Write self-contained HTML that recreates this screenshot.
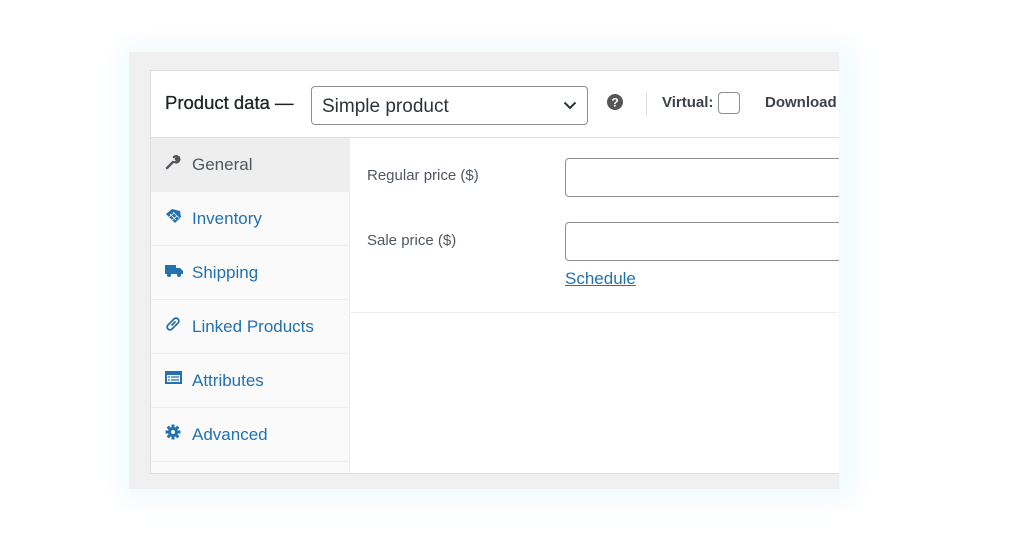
<!DOCTYPE html>
<html><head><meta charset="utf-8"><style>
*{margin:0;padding:0;box-sizing:border-box}
body{width:1024px;height:544px;background:#fff;position:relative;overflow:hidden;font-family:"Liberation Sans",sans-serif}
.glow{position:absolute;left:121px;top:44px;width:736px;height:456px;border-radius:14px;background:#f1fafb;filter:blur(12px)}
.frame{position:absolute;left:129px;top:52px;width:710px;height:437px;background:#f0f0f1}
.panel{position:absolute;left:150px;top:70px;width:689px;height:404px;background:#fff;border:1px solid #ddd;border-right:none;overflow:hidden}
.hdr{position:absolute;left:0;top:0;width:100%;height:67px;border-bottom:1px solid #ddd}
.t{position:absolute;font-size:17px;color:#1d2327}
.sel{position:absolute;left:160px;top:15px;width:277px;height:39px;border:1px solid #8c8f94;border-radius:4px;font-size:19px;color:#2c3338;padding:9px 10px}
.side{position:absolute;left:0;top:67px;width:199px;height:337px;background:#fafafa;border-right:1px solid #eee}
.it{height:54px;border-bottom:1px solid #eee;color:#2271b1;font-size:17px;padding:17px 0 0 41px;position:relative}
.it svg{position:absolute;left:14px;top:16px}
.it.act{background:#eee;color:#50575e}
.lbl{position:absolute;font-size:15px;color:#50575e}
.inp{position:absolute;left:414px;width:300px;height:39px;border:1px solid #8c8f94;border-radius:4px;background:#fff}
</style></head><body>
<div class="glow"></div>
<div class="frame"></div>
<div class="panel">
 <div class="hdr">
  <div class="t" style="left:14px;top:21px;font-size:18.5px;-webkit-text-stroke:0.3px #1d2327">Product data —</div>
  <div class="sel">Simple product
   <svg style="position:absolute;right:10px;top:14px" width="14" height="9" viewBox="0 0 14 9"><path d="M1.5 1.5L7 7L12.5 1.5" fill="none" stroke="#2c3338" stroke-width="2"/></svg></div>
  <svg style="position:absolute;left:456px;top:23px" width="16" height="16" viewBox="0 0 16 16"><circle cx="8" cy="8" r="8" fill="#555"/><text x="8" y="12.5" font-size="12" font-weight="bold" fill="#fff" text-anchor="middle" font-family="Liberation Sans">?</text></svg>
  <div style="position:absolute;left:495px;top:21px;width:1px;height:24px;background:#ddd"></div>
  <div class="t" style="left:511px;top:23px;font-size:15px;font-weight:bold;color:#3c434a">Virtual:</div>
  <div style="position:absolute;left:567px;top:21px;width:22px;height:22px;border:1px solid #8c8f94;border-radius:4px"></div>
  <div class="t" style="left:614px;top:23px;font-size:15px;font-weight:bold;color:#3c434a">Download</div>
 </div>
 <div class="side">
  <div class="it act"><svg width="16" height="16" viewBox="0 0 16 16"><path d="M2 14L8 8M9 3a3 3 0 0 1 4 0l-2 2 1 1 2-2a3 3 0 0 1-4 4" fill="none" stroke="#50575e" stroke-width="2.4" stroke-linecap="round"/></svg>General</div>
  <div class="it"><svg width="18" height="16" viewBox="0 0 18 16"><path d="M1 6L7 1L15 3L16 9L10 15Z" fill="#2271b1"/><path d="M5 6l6 6M8 4l6 6M4 9l5-4M7 12l5-4" stroke="#fff" stroke-width=".8"/></svg>Inventory</div>
  <div class="it"><svg width="18" height="16" viewBox="0 0 18 16"><path d="M0 3h11v9H0zM11 6h4l3 3v3h-7z" fill="#2271b1"/><circle cx="4" cy="13" r="2" fill="#2271b1"/><circle cx="14" cy="13" r="2" fill="#2271b1"/></svg>Shipping</div>
  <div class="it"><svg width="16" height="16" viewBox="0 0 16 16"><path d="M7 9L10 6M6 6l-3 3a2.5 2.5 0 0 0 4 4l2-2M10 10l3-3a2.5 2.5 0 0 0-4-4L7 5" fill="none" stroke="#2271b1" stroke-width="1.8" stroke-linecap="round"/></svg>Linked Products</div>
  <div class="it"><svg width="17" height="15" viewBox="0 0 17 15"><rect x="0" y="1" width="17" height="13" fill="#2271b1"/><rect x="2" y="5" width="13" height="7" fill="#fff"/><path d="M3 7h2M3 10h2M6 7h8M6 10h8" stroke="#2271b1" stroke-width="1.2"/></svg>Attributes</div>
  <div class="it"><svg width="16" height="16" viewBox="0 0 16 16"><g fill="#2271b1"><circle cx="8" cy="8" r="5"/><rect x="6.5" y="0.5" width="3" height="15"/><rect x="0.5" y="6.5" width="15" height="3"/><rect x="6.5" y="0.5" width="3" height="15" transform="rotate(45 8 8)"/><rect x="6.5" y="0.5" width="3" height="15" transform="rotate(-45 8 8)"/></g><circle cx="8" cy="8" r="2" fill="#fafafa"/></svg>Advanced</div>
 </div>
 <div class="lbl" style="left:216px;top:96px">Regular price ($)</div>
 <div class="inp" style="top:87px"></div>
 <div class="lbl" style="left:216px;top:161px">Sale price ($)</div>
 <div class="inp" style="top:151px"></div>
 <div style="position:absolute;left:414px;top:198px;font-size:17px;color:#2271b1;text-decoration:underline">Schedule</div>
 <div style="position:absolute;left:200px;top:241px;width:500px;height:1px;background:#eee"></div>
</div>
</body></html>
